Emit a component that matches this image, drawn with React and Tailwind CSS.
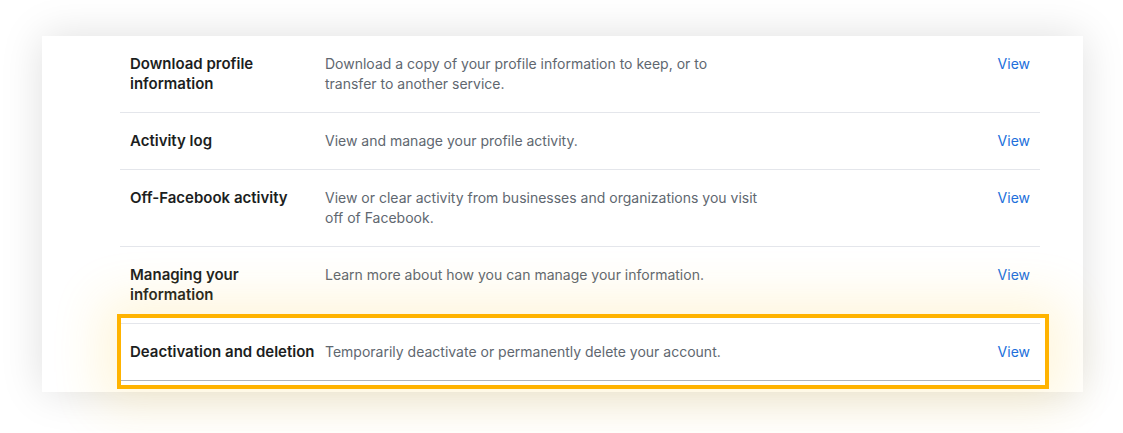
import React from "react";

const rows = [
  {
    title: "Download profile information",
    desc: "Download a copy of your profile information to keep, or to transfer to another service.",
  },
  { title: "Activity log", desc: "View and manage your profile activity." },
  {
    title: "Off-Facebook activity",
    desc: "View or clear activity from businesses and organizations you visit off of Facebook.",
  },
  {
    title: "Managing your information",
    desc: "Learn more about how you can manage your information.",
  },
];

function Row({ title, desc }) {
  return (
    <div className="flex items-start px-[10px] py-[18px]">
      <div className="w-[185px] mr-[10px] text-[15px] leading-[20px] font-semibold text-[#1c1e21]">
        {title}
      </div>
      <div className="w-[436px] text-[14px] leading-[20px] text-[#606770]">{desc}</div>
      <div className="flex-1" />
      <a className="text-[14px] leading-[20px] text-[#216fdb] cursor-pointer">View</a>
    </div>
  );
}

export default function App() {
  return (
    <div
      className="w-[1123px] h-[433px] bg-white overflow-hidden pt-[37px] pl-[42px]"
      style={{ fontFamily: "Inter, 'Noto Sans', sans-serif" }}
    >
      <div className="w-[1041px] h-[356px] bg-white shadow-[0_0_40px_rgba(0,0,0,0.13)] pl-[78px] pr-[43px] relative">
        <div className="-mt-[1px]">
          {rows.map((r, i) => (
            <div key={i} className="border-b border-[#e4e6eb]">
              <Row {...r} />
            </div>
          ))}
          <div className="relative border-b border-[#b0b3b8]">
            <div className="absolute -left-[3px] -right-[9px] -top-[10px] -bottom-[9px] border-[4.5px] border-[#ffb300] shadow-[0_0_50px_16px_rgba(255,200,40,0.16)] pointer-events-none" />
            <Row
              title="Deactivation and deletion"
              desc="Temporarily deactivate or permanently delete your account."
            />
          </div>
        </div>
      </div>
    </div>
  );
}
